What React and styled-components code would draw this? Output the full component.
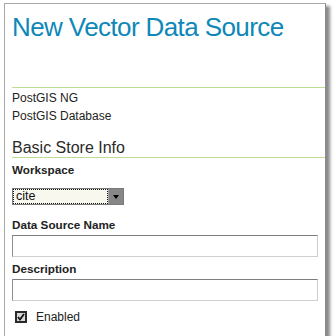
import React from 'react';
import styled, { createGlobalStyle } from 'styled-components';

const GlobalStyle = createGlobalStyle`
  body {
    margin: 0;
    background: #fff;
    font-family: "Liberation Sans", Arial, sans-serif;
    overflow: hidden;
  }
`;

const Page = styled.div`
  padding: 3px 0 0 4px;
  height: 336px;
  box-sizing: border-box;
`;

const Panel = styled.div`
  width: 322px;
  height: 340px;
  box-sizing: border-box;
  background: #fff;
  border-top: 1px solid #a8a8a8;
  border-left: 1px solid #a8a8a8;
  border-right: 1px solid #8c8c8c;
  box-shadow: 4px 3px 3px #8a8a8a;
  padding-left: 7px;
`;

const Header = styled.div`
  height: 84px;
  padding-top: 8px;
  box-sizing: border-box;
  border-bottom: 1px solid #bedb93;
`;

const Title = styled.h1`
  margin: 0;
  font-size: 26px;
  line-height: 30px;
  font-weight: normal;
  letter-spacing: -0.6px;
  color: #0e88b8;
`;

const Info = styled.p`
  margin: 1px 0 0;
  font-size: 12px;
  line-height: 18px;
  color: #222;
`;

const SectionTitle = styled.h3`
  margin: 13px 0 0;
  font-size: 16px;
  line-height: 19px;
  font-weight: normal;
  color: #2a2a2a;
  border-bottom: 1px solid #bedb93;
`;

const Form = styled.div`
  padding-right: 7px;
`;

const Label = styled.div`
  margin-top: ${p => p.$top}px;
  font-size: 11.7px;
  line-height: 16px;
  font-weight: bold;
  color: #222;
`;

const Select = styled.div`
  display: flex;
  width: 112px;
  height: 17px;
  margin-top: 10px;
  box-sizing: border-box;
  border: 1px solid #7a7a7a;
  background: #f8f8ef;
`;

const SelectValue = styled.div`
  flex: 1;
  border: 1px dotted #111;
  padding-left: 2px;
  font-size: 12.5px;
  line-height: 13px;
  color: #111;
`;

const SelectButton = styled.div`
  width: 14px;
  display: flex;
  align-items: center;
  justify-content: center;
  background: #878787;
  border-left: 1px solid #a6a6a6;

  &::after {
    content: '';
    border-left: 3px solid transparent;
    border-right: 3px solid transparent;
    border-top: 4px solid #000;
  }
`;

const TextInput = styled.input`
  display: block;
  width: 100%;
  height: 22px;
  margin: 2px 0 0;
  box-sizing: border-box;
  border-top: 1px solid #7d7d7d;
  border-left: 1px solid #8f8f8f;
  border-right: 1px solid #cfcfcf;
  border-bottom: 1px solid #cfcfcf;
  background: #fff;
  outline: none;
`;

const CheckRow = styled.label`
  display: flex;
  align-items: center;
  gap: 9px;
  margin-top: 8px;
  padding-left: 3px;
  font-size: 12px;
  line-height: 16px;
  color: #222;
`;

const CheckBox = styled.span`
  width: 12px;
  height: 12px;
  box-sizing: border-box;
  border: 2px solid #2a2a2a;
  background: #d8d8d8;
  display: flex;
  align-items: center;
  justify-content: center;
`;

export default function App() {
  return (
    <Page>
      <GlobalStyle />
      <Panel>
        <Header>
          <Title>New Vector Data Source</Title>
        </Header>
        <Info>PostGIS NG<br />PostGIS Database</Info>
        <SectionTitle>Basic Store Info</SectionTitle>
        <Form>
          <Label $top={4}>Workspace</Label>
          <Select>
            <SelectValue>cite</SelectValue>
            <SelectButton />
          </Select>
          <Label $top={12}>Data Source Name</Label>
          <TextInput />
          <Label $top={4}>Description</Label>
          <TextInput />
          <CheckRow>
            <CheckBox>
              <svg width="8" height="8" viewBox="0 0 8 8">
                <polyline points="1,4 3,6.5 7,1" fill="none" stroke="#111" strokeWidth="1.8" />
              </svg>
            </CheckBox>
            Enabled
          </CheckRow>
        </Form>
      </Panel>
    </Page>
  );
}
